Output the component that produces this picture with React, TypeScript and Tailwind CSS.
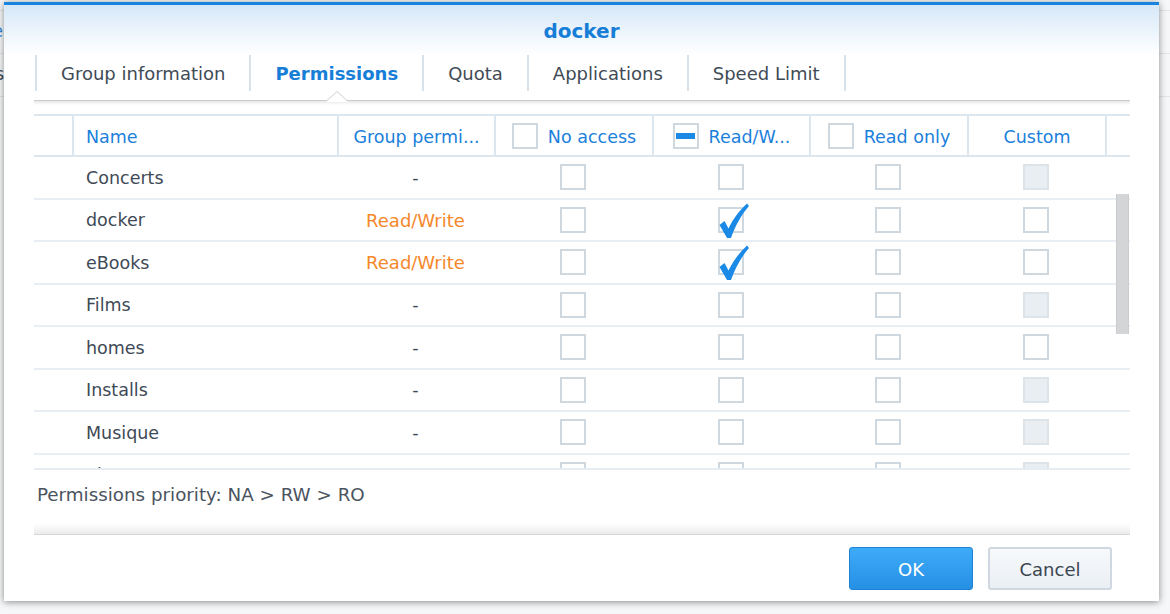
import React from 'react';

type Row = { name: string; perm: string; rw?: boolean; customOff?: boolean };

const rows: Row[] = [
  { name: 'Concerts', perm: '-', customOff: true },
  { name: 'docker', perm: 'Read/Write', rw: true },
  { name: 'eBooks', perm: 'Read/Write', rw: true },
  { name: 'Films', perm: '-', customOff: true },
  { name: 'homes', perm: '-' },
  { name: 'Installs', perm: '-', customOff: true },
  { name: 'Musique', perm: '-', customOff: true },
  { name: 'photo', perm: '-', customOff: true },
];

const tabs = ['Group information', 'Permissions', 'Quota', 'Applications', 'Speed Limit'];

const cols = 'grid grid-cols-[38px_265px_157px_158px_157px_158px_138px_25px]';

const Box = ({ checked, disabled, minus }: { checked?: boolean; disabled?: boolean; minus?: boolean }) => (
  <div
    className={`relative w-[26px] h-[26px] border-2 shrink-0 ${
      disabled ? 'bg-[#e9eef2] border-[#dce3e9]' : 'bg-white border-[#d0d8df]'
    }`}
  >
    {minus && <div className="absolute left-[1px] top-[8px] w-[19px] h-[6px] bg-[#1a8ae6]" />}
    {checked && (
      <svg className="absolute left-[-2px] top-[-6px]" width="32" height="36" viewBox="0 0 32 36">
        <path
          d="M1.5 22 L6.5 18 L10.5 25.5 C15.5 15 22 7 29 0.5 L31 3 C24 11 17.5 22 13 35 L9 35 Z"
          fill="#1a8ae6"
        />
      </svg>
    )}
  </div>
);

export default function App() {
  return (
    <div className="relative w-[1170px] h-[614px] overflow-hidden bg-[#f6f7f8] font-['DejaVu_Sans',sans-serif]">
      {/* app behind the dialog */}
      <div className="flex flex-col">
        <div className="h-[11px] border-b border-[#e3e5e7]" />
        <div className="h-[43px] border-b border-[#e3e5e7] flex items-center">
          <div className="w-[3px] flex justify-end whitespace-nowrap text-[17px] text-[#2b86d8]">Name</div>
        </div>
        <div className="h-[43px] border-b border-[#e3e5e7] flex items-center">
          <div className="w-[4px] flex justify-end whitespace-nowrap text-[17px] text-[#3f4a56]">Groups</div>
        </div>
      </div>

      {/* dialog window */}
      <div className="absolute left-[4px] top-[2px] w-[1155px] h-[599px] bg-white shadow-[0_1px_7px_rgba(0,0,0,0.45)] flex flex-col">
        <div className="h-[3px] bg-[#1884e0]" />
        <div className="h-[50px] pt-[2px] bg-gradient-to-b from-[#d6e8f8] to-white flex items-center justify-center text-[20px] font-bold text-[#177ed8]">
          docker
        </div>

        <div className="pl-[30px] pr-[29px] flex flex-col">
          {/* tabs */}
          <div className="h-[46px] border-b border-[#c9cbcd] flex items-start pl-[1px]">
            {tabs.map((t, i) => (
              <div
                key={t}
                className={`relative h-[36px] flex items-center px-[24px] border-l-2 border-[#d8e2ea] text-[18px] ${
                  i === tabs.length - 1 ? 'border-r-2' : ''
                } ${i === 1 ? 'font-bold text-[#177ed8]' : 'text-[#414b56]'}`}
              >
                {t}
                {i === 1 && (
                  <svg className="absolute top-[35px] left-1/2 -translate-x-1/2" width="20" height="12" viewBox="0 0 20 12">
                    <path d="M0 10.5 L10 1.5 L20 10.5 L20 12 L0 12 Z" fill="white" />
                    <path d="M0 10.5 L10 1.5 L20 10.5" fill="none" stroke="#cdd0d3" strokeWidth="1" />
                  </svg>
                )}
              </div>
            ))}
          </div>
          <div className="h-[4px] bg-gradient-to-b from-[#e6e7e8] to-white" />

          {/* table */}
          <div className="mt-[9px] text-[17.5px]">
            <div className={`${cols} h-[43px] border-y-2 border-[#dce6ef] text-[#1b80dc]`}>
              <div />
              <div className="border-l-2 border-[#dce6ef] pl-[12px] pt-[3px] flex items-center">Name</div>
              <div className="border-l-2 border-[#dce6ef] pt-[3px] flex items-center justify-center whitespace-nowrap">Group permi...</div>
              <div className="border-l-2 border-[#dce6ef] flex items-center justify-center gap-[10px] whitespace-nowrap">
                <Box />
                <span className="pt-[3px]">No access</span>
              </div>
              <div className="border-l-2 border-[#dce6ef] flex items-center justify-center gap-[10px] whitespace-nowrap">
                <Box minus />
                <span className="pt-[3px]">Read/W...</span>
              </div>
              <div className="border-l-2 border-[#dce6ef] flex items-center justify-center gap-[10px] whitespace-nowrap">
                <Box />
                <span className="pt-[3px]">Read only</span>
              </div>
              <div className="border-l-2 border-[#dce6ef] pt-[3px] flex items-center justify-center">Custom</div>
              <div className="border-l-2 border-[#dce6ef]" />
            </div>

            <div className="relative h-[313px] overflow-hidden border-b-2 border-[#e6ecf2]">
              {rows.map((r) => (
                <div key={r.name} className={`${cols} h-[42.5px] border-b-2 border-[#e8eef3] text-[#404a56]`}>
                  <div />
                  <div className="pl-[14px] pt-[1px] flex items-center">{r.name}</div>
                  <div className={`flex items-center justify-center pt-[1px] ${r.rw ? 'text-[#f5882a] text-[18px]' : ''}`}>{r.perm}</div>
                  <div className="flex items-center justify-center">
                    <Box />
                  </div>
                  <div className="flex items-center justify-center">
                    <Box checked={r.rw} />
                  </div>
                  <div className="flex items-center justify-center">
                    <Box />
                  </div>
                  <div className="flex items-center justify-center">
                    <Box disabled={r.customOff} />
                  </div>
                  <div />
                </div>
              ))}
              <div className="absolute right-[1px] top-[37px] w-[13px] h-[140px] bg-[#d4d5d7] border-x border-[#cbcccf]" />
            </div>
          </div>

          <div className="mt-[13px] h-[24px] flex items-center pl-[3px] text-[18.3px] text-[#4a5460]">
            Permissions priority: NA &gt; RW &gt; RO
          </div>

          <div className="mt-[16px] h-[12px] bg-gradient-to-b from-white to-[#ececec] border-b border-[#d3d5d7]" />

          <div className="mt-[12px] flex justify-end gap-[15px] pr-[18px]">
            <button className="w-[124px] h-[43px] pt-[2px] rounded-[3px] border border-[#1f81d6] bg-gradient-to-b from-[#3eabf9] to-[#2590e4] text-white text-[18px]">
              OK
            </button>
            <button className="w-[124px] h-[43px] pt-[2px] rounded-[3px] border-2 border-[#cfd8e0] bg-gradient-to-b from-[#f7f9fb] to-[#eaeff4] text-[#3b4651] text-[18px]">
              Cancel
            </button>
          </div>
        </div>
      </div>
    </div>
  );
}
